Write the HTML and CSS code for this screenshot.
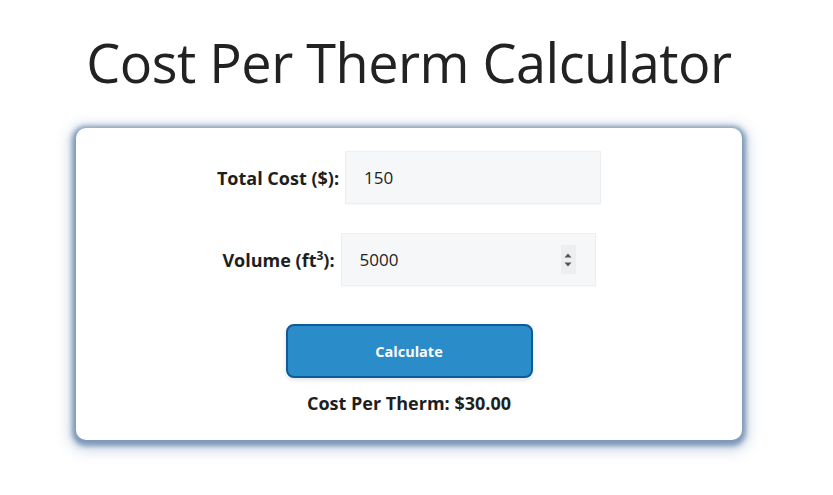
FILE: index.html
```html
<!DOCTYPE html>
<html lang="en">
<head>
<meta charset="utf-8">
<title>Cost Per Therm Calculator</title>
<link rel="stylesheet" href="styles.css">
</head>
<body>
<main class="page">
  <h1 class="title">Cost Per Therm Calculator</h1>
  <section class="card">
    <div class="row">
      <label class="label" for="cost">Total Cost ($):</label>
      <input class="field" id="cost" type="text" value="150">
    </div>
    <div class="row">
      <label class="label" for="vol">Volume (ft<sup>3</sup>):</label>
      <div class="field-wrap">
        <input class="field" id="vol" type="number" value="5000">
        <span class="spinner">
          <svg width="10" height="26" viewBox="0 0 10 26"><path d="M1.5 10.5 L5 6.5 L8.5 10.5 Z" fill="#555"/><path d="M1.5 15.5 L5 19.5 L8.5 15.5 Z" fill="#555"/></svg>
        </span>
      </div>
    </div>
    <button class="btn" type="button">Calculate</button>
    <p class="result">Cost Per Therm: $30.00</p>
  </section>
</main>
</body>
</html>
```
FILE: styles.css
```css
html, body {
  margin: 0;
  padding: 0;
  background: #ffffff;
}
body {
  font-family: "Open Sans", "Noto Sans", sans-serif;
  color: #212121;
}
.page {
  width: 818px;
  padding-top: 22px;
  padding-bottom: 40px;
}
.title {
  margin: 0;
  text-align: center;
  font-weight: 400;
  font-size: 54px;
  line-height: 80px;
  letter-spacing: -0.5px;
  color: #222;
}
.card {
  width: 666px;
  box-sizing: border-box;
  margin: 26px auto 0;
  background: #fff;
  border-radius: 10px;
  box-shadow: 0 2px 5px 4px rgba(110, 140, 175, 0.85), 0 4px 14px 7px rgba(145, 170, 200, 0.4);
  padding: 23px 0 25px;
  display: flex;
  flex-direction: column;
  align-items: center;
}
.row {
  display: flex;
  align-items: center;
  gap: 6px;
  margin-bottom: 29px;
}
.label {
  font-weight: 700;
  font-size: 18px;
  color: #1e1e1e;
}
.label sup {
  font-size: 12px;
  line-height: 0;
}
.field-wrap {
  position: relative;
}
.field {
  width: 256px;
  height: 53px;
  box-sizing: border-box;
  border: 1px solid #eceef1;
  background: #f6f7f9;
  padding: 0 18px;
  font-family: inherit;
  font-size: 17px;
  color: #222;
  outline: none;
  box-shadow: 0 1px 2px rgba(0,0,0,0.03);
}
#vol {
  width: 255px;
  -moz-appearance: textfield;
}
#vol::-webkit-outer-spin-button,
#vol::-webkit-inner-spin-button {
  -webkit-appearance: none;
  margin: 0;
}
.spinner {
  position: absolute;
  right: 20px;
  top: 12px;
  width: 15px;
  height: 29px;
  background: #eceef0;
  display: flex;
  align-items: center;
  justify-content: center;
}
.btn {
  margin-top: 9px;
  width: 247px;
  height: 54px;
  background: #2a8cc8;
  border: 2px solid #0e5a9a;
  border-radius: 8px;
  color: #fff;
  font-family: inherit;
  font-weight: 700;
  font-size: 14.5px;
  box-shadow: 0 2px 5px rgba(0,0,0,0.12);
}
.result {
  margin: 13px 0 0;
  font-weight: 700;
  font-size: 18px;
  color: #1e1e1e;
}
```
